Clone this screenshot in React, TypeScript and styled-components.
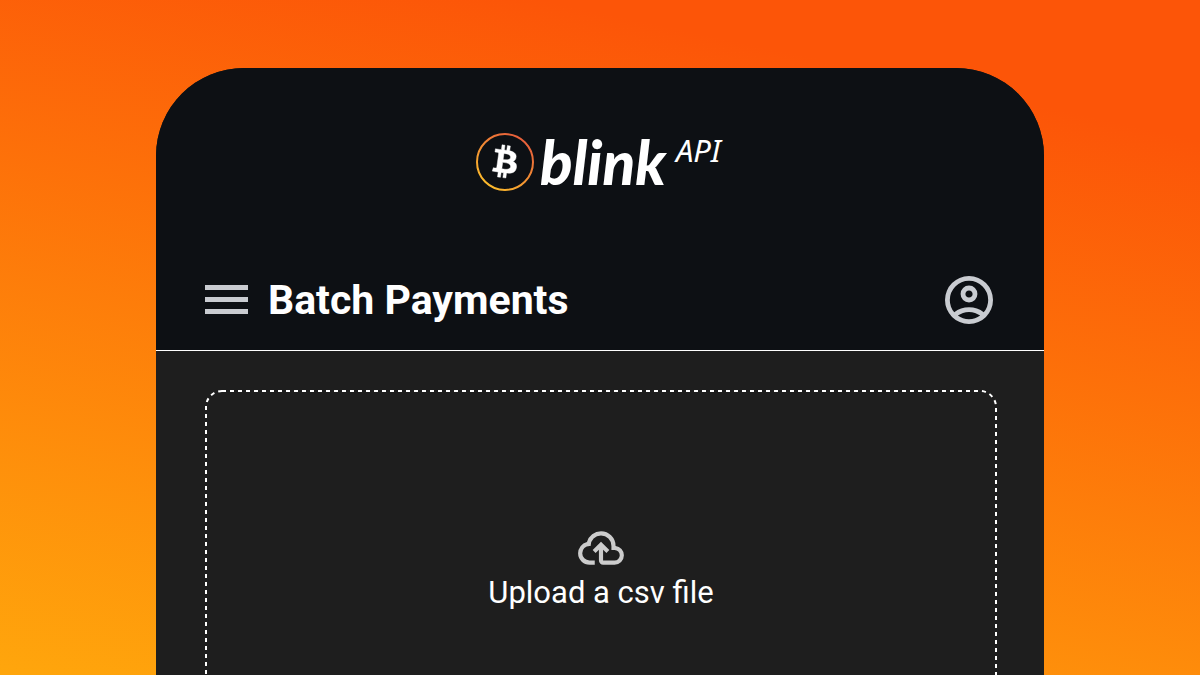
import React from "react";
import styled, { createGlobalStyle } from "styled-components";

const GlobalStyle = createGlobalStyle`
  *, *::before, *::after { box-sizing: border-box; }
  body {
    margin: 0;
    font-family: Roboto, "Noto Sans", sans-serif;
    color: #fff;
  }
`;

const Page = styled.main`
  display: flex;
  flex-direction: column;
  height: 100vh;
  padding: 68px 13% 0;
  overflow: hidden;
  background: linear-gradient(192deg, #fc5508 15%, #ffa60c 100%);
`;

const Card = styled.section`
  flex: none;
  border-radius: 88px 88px 0 0;
  overflow: hidden;
  background: #1e1e1e;
`;

const Header = styled.header`
  padding: 64px 51px 25px 48px;
  background: #0d1014;
  border-bottom: 1px solid #fff;
`;

const Brand = styled.a`
  display: flex;
  justify-content: center;
  align-items: center;
  gap: 6px;
  height: 60px;
  color: inherit;
  text-decoration: none;
`;

const Wordmark = styled.span`
  font: italic 900 60px/60px Lato, sans-serif;
`;

const Product = styled.sup`
  align-self: flex-start;
  margin-left: 4px;
  font: italic 400 31px/36px "Noto Sans", sans-serif;
`;

const TitleBar = styled.div`
  display: flex;
  align-items: center;
  gap: 20px;
  margin-top: 83px;
`;

const IconButton = styled.button`
  display: flex;
  padding: 0;
  border: 0;
  background: none;
  color: #c9ccd1;
  cursor: pointer;
`;

const Title = styled.h1`
  flex: 1;
  margin: 0;
  font: 700 41px/50px Roboto, sans-serif;
`;

const Content = styled.div`
  padding: 39px 47px 48px 49px;
`;

const DropZone = styled.label`
  position: relative;
  display: flex;
  flex-direction: column;
  align-items: center;
  padding: 133px 24px;
  cursor: pointer;
`;

const DashedOutline = styled.svg`
  position: absolute;
  inset: 0;
  width: 100%;
  height: 100%;
  overflow: visible;
  pointer-events: none;

  rect {
    width: calc(100% - 2px);
    height: calc(100% - 2px);
  }
`;

const FileInput = styled.input`
  position: absolute;
  inset: 0;
  width: 100%;
  height: 100%;
  opacity: 0;
  cursor: pointer;
`;

const UploadIcon = styled.svg`
  color: #cccccc;
`;

const UploadText = styled.span`
  font: 400 31px/40px Roboto, sans-serif;
`;

const BitcoinMark = () => (
  <svg width="58" height="58" viewBox="0 0 58 58" fill="none" aria-hidden="true">
    <defs>
      <linearGradient id="ring" x1="12" y1="52" x2="44" y2="6" gradientUnits="userSpaceOnUse">
        <stop offset="0" stopColor="#fbb92c" />
        <stop offset="1" stopColor="#e8613a" />
      </linearGradient>
    </defs>
    <circle cx="29" cy="29" r="28" stroke="url(#ring)" strokeWidth="2" />
    <path
      transform="rotate(-6 29 29) translate(2.6 2.4) scale(2.2)"
      fill="#fff"
      stroke="#fff"
      strokeWidth="0.2"
      d="M17.288 10.291c.24-1.59-.974-2.45-2.64-3.03l.54-2.153-1.315-.33-.525 2.107c-.345-.087-.705-.167-1.064-.25l.526-2.127-1.32-.33-.54 2.165c-.285-.067-.565-.132-.84-.2l-1.815-.45-.35 1.407s.975.225.955.236c.535.136.63.486.615.766l-1.477 5.92c-.075.166-.24.406-.614.314.015.02-.96-.24-.96-.24l-.66 1.51 1.71.426.93.242-.54 2.19 1.32.327.54-2.17c.36.1.705.19 1.05.273l-.51 2.154 1.32.33.545-2.19c2.24.427 3.93.257 4.64-1.774.57-1.637-.03-2.58-1.217-3.196.854-.193 1.5-.76 1.68-1.93h.01zm-3.01 4.22c-.404 1.64-3.157.75-4.05.53l.72-2.9c.896.23 3.757.67 3.33 2.37zm.41-4.24c-.37 1.49-2.662.735-3.405.55l.654-2.64c.744.18 3.137.524 2.75 2.084v.006z"
    />
  </svg>
);

const MenuIcon = () => (
  <svg width="44" height="30" viewBox="0 0 44 30" fill="currentColor" aria-hidden="true">
    <path d="M1 0h43v5H1zM1 12h43v5H1zM1 24h43v5H1z" />
  </svg>
);

const AccountIcon = () => (
  <svg width="48" height="48" viewBox="80 -880 800 800" fill="currentColor" aria-hidden="true">
    <path d="M234-276q51-39 114-61.5T480-360q69 0 132 22.5T726-276q35-41 54.5-93T800-480q0-133-93.5-226.5T480-800q-133 0-226.5 93.5T160-480q0 59 19.5 111t54.5 93Zm246-164q-59 0-99.5-40.5T340-580q0-59 40.5-99.5T480-720q59 0 99.5 40.5T620-580q0 59-40.5 99.5T480-440Zm0 360q-83 0-156-31.5T197-197q-54-54-85.5-127T80-480q0-83 31.5-156T197-763q54-54 127-85.5T480-880q83 0 156 31.5T763-763q54 54 85.5 127T880-480q0 83-31.5 156T763-197q-54 54-127 85.5T480-80Zm0-80q53 0 100-15.5t86-44.5q-39-29-86-44.5T480-280q-53 0-100 15.5T294-220q39 29 86 44.5T480-160Zm0-360q26 0 43-17t17-43q0-26-17-43t-43-17q-26 0-43 17t-17 43q0 26 17 43t43 17Z" />
  </svg>
);

export default function App() {
  return (
    <>
      <GlobalStyle />
      <Page>
        <Card>
          <Header>
            <Brand href="#">
              <BitcoinMark />
              <Wordmark>blink</Wordmark>
              <Product>API</Product>
            </Brand>
            <TitleBar>
              <IconButton type="button" aria-label="Open menu">
                <MenuIcon />
              </IconButton>
              <Title>Batch Payments</Title>
              <IconButton type="button" aria-label="Account">
                <AccountIcon />
              </IconButton>
            </TitleBar>
          </Header>
          <Content>
            <DropZone>
              <DashedOutline aria-hidden="true">
                <rect x="1" y="1" rx="16" fill="none" stroke="#fff" strokeWidth="2" strokeDasharray="4 4" />
              </DashedOutline>
              <UploadIcon width="50" height="50" viewBox="0 -960 960 960" fill="currentColor" aria-hidden="true">
                <path d="M260-160q-91 0-155.500-63T40-377q0-78 47-139t123-78q25-92 100-149t170-57q117 0 198.500 81.500T760-520q69 8 114.500 59.500T920-340q0 75-52.500 127.500T740-160H520q-33 0-56.500-23.500T440-240v-206l-64 62-56-56 160-160 160 160-56 56-64-62v206h220q42 0 71-29t29-71q0-42-29-71t-71-29h-60v-80q0-83-58.500-141.500T480-720q-83 0-141.500 58.500T280-520h-20q-58 0-99 41t-41 99q0 58 41 99t99 41h100v80H260Z" />
              </UploadIcon>
              <UploadText>Upload a csv file</UploadText>
              <FileInput type="file" accept=".csv" />
            </DropZone>
          </Content>
        </Card>
      </Page>
    </>
  );
}
